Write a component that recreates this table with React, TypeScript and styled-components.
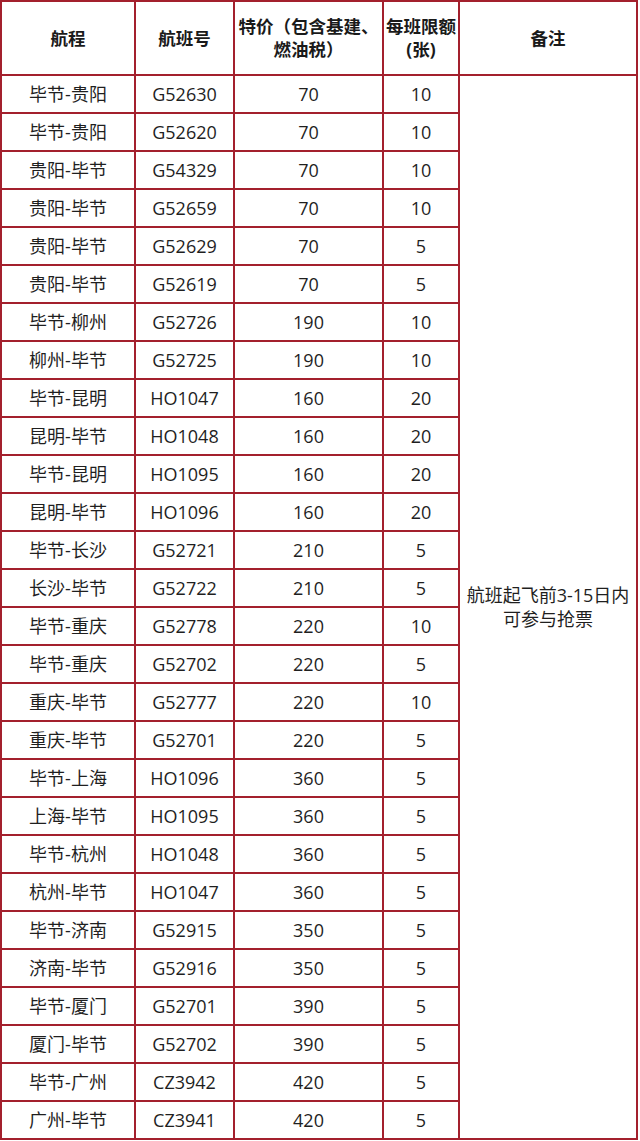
import styled, { createGlobalStyle } from 'styled-components';

interface Flight {
	route: string;
	flightNo: string;
	price: number;
	quota: number;
}

const flights: Flight[] = [
	{ route: '毕节-贵阳', flightNo: 'G52630', price: 70, quota: 10 },
	{ route: '毕节-贵阳', flightNo: 'G52620', price: 70, quota: 10 },
	{ route: '贵阳-毕节', flightNo: 'G54329', price: 70, quota: 10 },
	{ route: '贵阳-毕节', flightNo: 'G52659', price: 70, quota: 10 },
	{ route: '贵阳-毕节', flightNo: 'G52629', price: 70, quota: 5 },
	{ route: '贵阳-毕节', flightNo: 'G52619', price: 70, quota: 5 },
	{ route: '毕节-柳州', flightNo: 'G52726', price: 190, quota: 10 },
	{ route: '柳州-毕节', flightNo: 'G52725', price: 190, quota: 10 },
	{ route: '毕节-昆明', flightNo: 'HO1047', price: 160, quota: 20 },
	{ route: '昆明-毕节', flightNo: 'HO1048', price: 160, quota: 20 },
	{ route: '毕节-昆明', flightNo: 'HO1095', price: 160, quota: 20 },
	{ route: '昆明-毕节', flightNo: 'HO1096', price: 160, quota: 20 },
	{ route: '毕节-长沙', flightNo: 'G52721', price: 210, quota: 5 },
	{ route: '长沙-毕节', flightNo: 'G52722', price: 210, quota: 5 },
	{ route: '毕节-重庆', flightNo: 'G52778', price: 220, quota: 10 },
	{ route: '毕节-重庆', flightNo: 'G52702', price: 220, quota: 5 },
	{ route: '重庆-毕节', flightNo: 'G52777', price: 220, quota: 10 },
	{ route: '重庆-毕节', flightNo: 'G52701', price: 220, quota: 5 },
	{ route: '毕节-上海', flightNo: 'HO1096', price: 360, quota: 5 },
	{ route: '上海-毕节', flightNo: 'HO1095', price: 360, quota: 5 },
	{ route: '毕节-杭州', flightNo: 'HO1048', price: 360, quota: 5 },
	{ route: '杭州-毕节', flightNo: 'HO1047', price: 360, quota: 5 },
	{ route: '毕节-济南', flightNo: 'G52915', price: 350, quota: 5 },
	{ route: '济南-毕节', flightNo: 'G52916', price: 350, quota: 5 },
	{ route: '毕节-厦门', flightNo: 'G52701', price: 390, quota: 5 },
	{ route: '厦门-毕节', flightNo: 'G52702', price: 390, quota: 5 },
	{ route: '毕节-广州', flightNo: 'CZ3942', price: 420, quota: 5 },
	{ route: '广州-毕节', flightNo: 'CZ3941', price: 420, quota: 5 },
];

const columnWidths = [134, 99, 149, 76, 178];

const GlobalStyle = createGlobalStyle`
	body {
		margin: 0;
		background: #ffffff;
		font-family: "Open Sans", "Noto Sans CJK SC", sans-serif;
		color: #1f1f1f;
	}
`;

const Table = styled.table`
	border-collapse: separate;
	border-spacing: 0;
	border-top: 2px solid #a3202d;
	border-left: 2px solid #a3202d;
	table-layout: fixed;
	width: 638px;
`;

const HeadCell = styled.th`
	box-sizing: border-box;
	height: 74px;
	padding: 0 2px;
	border-right: 2px solid #a3202d;
	border-bottom: 2px solid #a3202d;
	font-size: 17.5px;
	font-weight: 700;
	line-height: 23px;
	text-align: center;
	vertical-align: middle;
	color: #1a1a1a;
`;

const Cell = styled.td`
	box-sizing: border-box;
	height: 38px;
	padding: 0;
	border-right: 2px solid #a3202d;
	border-bottom: 2px solid #a3202d;
	font-size: 18px;
	line-height: 22px;
	text-align: center;
	vertical-align: middle;
	white-space: nowrap;
`;

const NoteCell = styled(Cell)`
	white-space: normal;
	line-height: 24px;
`;

export default function App() {
	return (
		<>
			<GlobalStyle />
			<Table>
				<colgroup>
					{columnWidths.map((w, i) => (
						<col key={i} style={{ width: w }} />
					))}
				</colgroup>
				<thead>
					<tr>
						<HeadCell>航程</HeadCell>
						<HeadCell>航班号</HeadCell>
						<HeadCell>特价（包含基建、<br />燃油税）</HeadCell>
						<HeadCell>每班限额<br />(张)</HeadCell>
						<HeadCell>备注</HeadCell>
					</tr>
				</thead>
				<tbody>
					{flights.map((f, i) => (
						<tr key={i}>
							<Cell>{f.route}</Cell>
							<Cell>{f.flightNo}</Cell>
							<Cell>{f.price}</Cell>
							<Cell>{f.quota}</Cell>
							{i === 0 && (
								<NoteCell rowSpan={flights.length}>
									航班起飞前3-15日内<br />可参与抢票
								</NoteCell>
							)}
						</tr>
					))}
				</tbody>
			</Table>
		</>
	);
}
